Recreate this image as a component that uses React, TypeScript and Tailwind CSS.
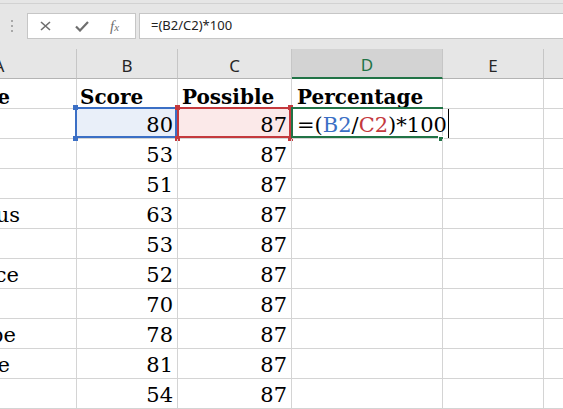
import React from "react";

type Row = {
  name?: string;
  tail?: string;
  score: number;
  possible: number;
};

const rows: Row[] = [
  { score: 80, possible: 87 },
  { score: 53, possible: 87 },
  { score: 51, possible: 87 },
  { name: "Marcus", tail: "pr-[56px]", score: 63, possible: 87 },
  { score: 53, possible: 87 },
  { name: "Grace", tail: "pr-[57px]", score: 52, possible: 87 },
  { score: 70, possible: 87 },
  { name: "Phoebe", tail: "pr-[60px]", score: 78, possible: 87 },
  { name: "Jane", tail: "pr-[66px]", score: 81, possible: 87 },
  { score: 54, possible: 87 },
];

const cell = "h-[30px] border-r border-b border-[#d4d4d4] flex items-end";
const num = "justify-end pr-[4px] pb-[2px] text-[21px] leading-none";
const head = "pb-[1px] text-[20px] leading-none font-bold";

function Handle({ className }: { className: string }) {
  return <span className={"absolute h-[5px] w-[5px] " + className} />;
}

function ColHeader({ label, active }: { label: string; active?: boolean }) {
  return (
    <div
      className={
        "flex h-[30px] items-end justify-center pb-[4px] text-[17px] leading-none font-['Noto_Sans',sans-serif] " +
        (active
          ? "border-r border-b-2 border-r-[#c6c6c6] border-b-[#217346] bg-[#d3d3d3] text-[#217346]"
          : "border-r border-b border-r-[#c6c6c6] border-b-[#b4b4b4] bg-[#e6e6e6] text-[#262626]")
      }
    >
      {label}
    </div>
  );
}

function FormulaBar() {
  return (
    <div className="h-[49px] bg-[#e6e6e6]">
      <div className="h-[4px] border-b border-[#d2d2d2]" />
      <div className="h-[9px]" />
      <div className="flex h-[26px]">
        <div className="flex w-[27px] flex-col items-center justify-center gap-[3px] pr-[4px]">
          <span className="h-[2px] w-[2px] bg-[#a8a8a8]" />
          <span className="h-[2px] w-[2px] bg-[#a8a8a8]" />
          <span className="h-[2px] w-[2px] bg-[#a8a8a8]" />
        </div>
        <div className="flex w-[109px] items-center border border-[#c6c6c6] bg-white">
          <svg width="11" height="10" viewBox="0 0 11 10" className="ml-[12px]">
            <path d="M1 1 L10 9 M10 1 L1 9" stroke="#6e6e6e" strokeWidth="1.6" />
          </svg>
          <svg width="14" height="11" viewBox="0 0 14 11" className="ml-[24px]">
            <path d="M1 5.5 L5 9.5 L13 1" fill="none" stroke="#6e6e6e" strokeWidth="2.2" />
          </svg>
          <span className="ml-[21px] font-['Liberation_Serif',serif] text-[15px] italic leading-none text-[#707070]">
            f<span className="text-[11px]">x</span>
          </span>
        </div>
        <div className="w-[3px]" />
        <div className="flex flex-1 items-center border-y border-l border-[#c6c6c6] bg-white pl-[11px] font-['Noto_Sans',sans-serif] text-[13px] text-[#222]">
          =(B2/C2)*100
        </div>
      </div>
      <div className="h-[10px]" />
    </div>
  );
}

export default function App() {
  return (
    <div className="h-[409px] w-[563px] overflow-hidden bg-white font-['DejaVu_Serif',serif] text-black">
      <FormulaBar />
      <div className="-ml-[78px] grid grid-cols-[155px_101px_114px_151px_101px_101px]">
        <ColHeader label="A" />
        <ColHeader label="B" />
        <ColHeader label="C" />
        <ColHeader label="D" active />
        <ColHeader label="E" />
        <ColHeader label="F" />

        <div className={cell + " justify-end overflow-hidden pr-[66px] " + head}>Name</div>
        <div className={cell + " pl-[3px] " + head}>Score</div>
        <div className={cell + " pl-[4px] " + head}>Possible</div>
        <div className={cell + " pl-[5px] " + head}>Percentage</div>
        <div className={cell} />
        <div className={cell} />

        {rows.map((r, i) => (
          <React.Fragment key={i}>
            <div className={cell + " justify-end overflow-hidden pb-[2px] text-[21px] leading-none " + (r.tail ?? "")}>
              {r.name}
            </div>
            <div className={cell + " relative " + num + (i === 0 ? " bg-[#e9eff9]" : "")}>
              {i === 0 && (
                <>
                  <span className="absolute -top-[2px] -left-[2px] right-0 bottom-0 border-2 border-[#3b6fc5]" />
                  <Handle className="-top-[4px] -left-[4px] bg-[#3b6fc5]" />
                  <Handle className="-bottom-[3px] -left-[4px] bg-[#3b6fc5]" />
                </>
              )}
              <span className="relative">{r.score}</span>
            </div>
            <div className={cell + " relative " + num + (i === 0 ? " bg-[#fbe9e9]" : "")}>
              {i === 0 && (
                <>
                  <span className="absolute -top-[2px] -left-[1px] right-0 bottom-0 border-2 border-[#c4393d]" />
                  <Handle className="-top-[4px] -left-[3px] bg-[#c4393d]" />
                  <Handle className="-bottom-[3px] -left-[3px] bg-[#c4393d]" />
                  <Handle className="-top-[4px] -right-[2px] bg-[#c4393d]" />
                  <Handle className="-bottom-[3px] -right-[2px] bg-[#c4393d]" />
                </>
              )}
              <span className="relative">{r.possible}</span>
            </div>
            <div className={cell + " relative pl-[5px] pb-[2px] text-[21px] leading-none"}>
              {i === 0 && (
                <>
                  <span className="absolute -top-[2px] -left-[1px] -right-[1px] bottom-0 border-y-2 border-l-2 border-[#217346]" />
                  <Handle className="-bottom-[4px] -right-[2px] border border-white bg-[#217346] h-[6px] w-[6px]" />
                  <span className="relative z-10 flex h-full items-end whitespace-nowrap">
                    <span>
                      =(<span className="text-[#3b6fc5]">B2</span>/<span className="text-[#c4393d]">C2</span>)*100
                    </span>
                    <span className="ml-[1px] -mb-[2px] h-[29px] w-px bg-black" />
                  </span>
                </>
              )}
            </div>
            <div className={cell} />
            <div className={cell} />
          </React.Fragment>
        ))}
      </div>
    </div>
  );
}
